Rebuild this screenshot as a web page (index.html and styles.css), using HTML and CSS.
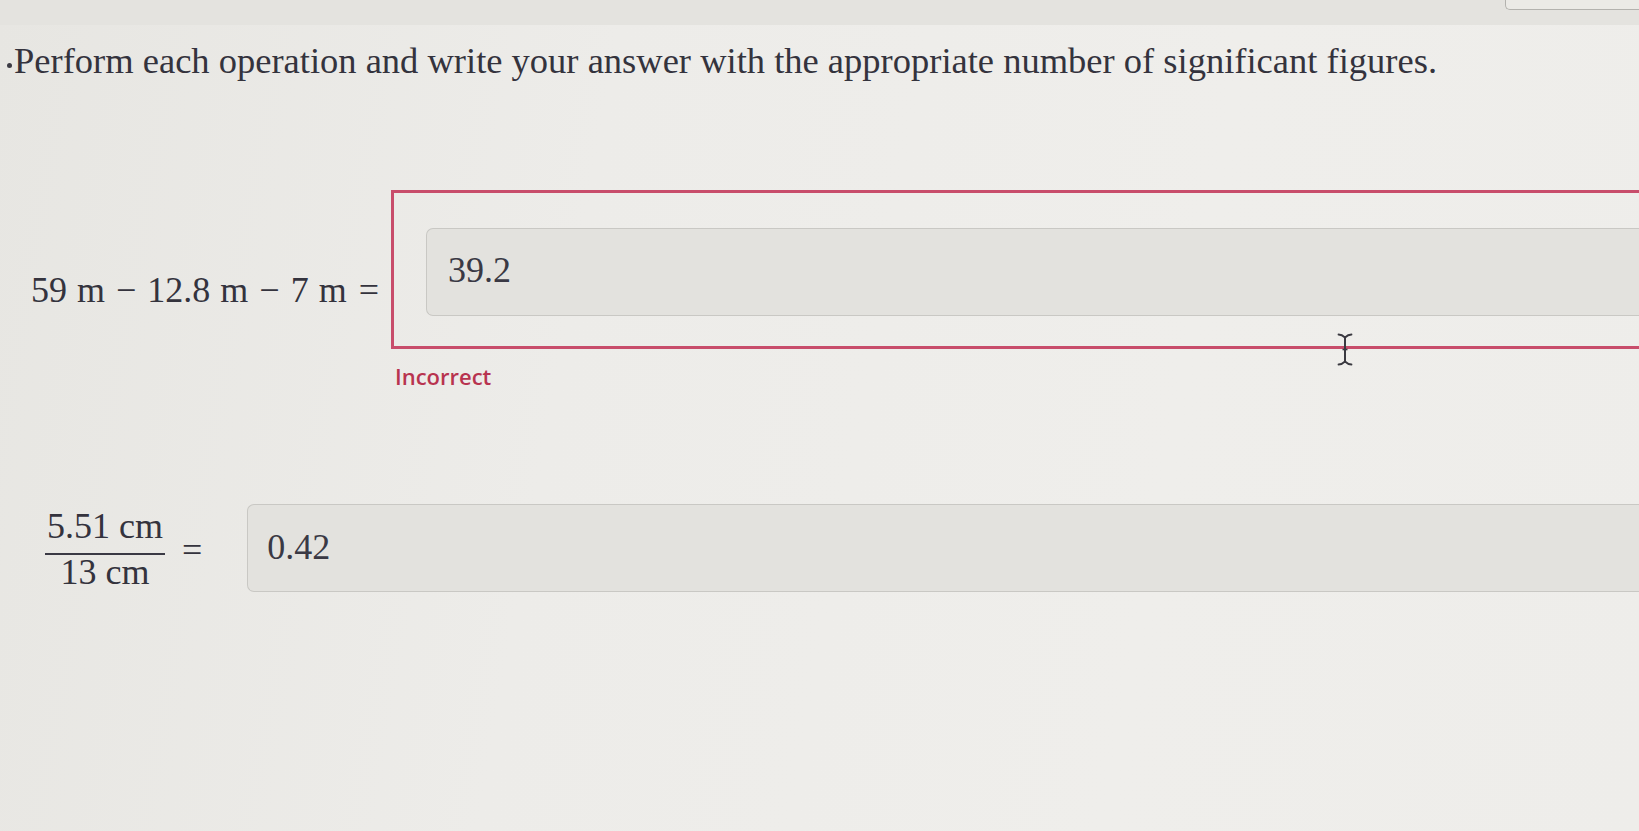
FILE: index.html
```html
<!DOCTYPE html>
<html lang="en">
<head>
<meta charset="utf-8">
<title>Significant figures</title>
<link rel="stylesheet" href="styles.css">
</head>
<body>
<div class="topbar"><div class="topbox"></div></div>
<div class="prompt-row">
  <span class="dot"></span>
  <p class="prompt">Perform each operation and write your answer with the appropriate number of significant figures.</p>
</div>

<div class="question q1">
  <div class="math eq">
    <span>59</span><span class="unit">m</span><span class="op">−</span><span>12.8</span><span class="unit">m</span><span class="op">−</span><span>7</span><span class="unit">m</span><span class="rel">=</span>
  </div>
  <div class="answer">
    <div class="redbox">
      <div class="field">39.2</div>
    </div>
    <div class="feedback">Incorrect</div>
  </div>
</div>

<div class="question q2">
  <div class="math frac">
    <span class="num">5.51 cm</span>
    <span class="bar"></span>
    <span class="den">13 cm</span>
  </div>
  <span class="math rel2">=</span>
  <div class="field field2">0.42</div>
</div>

<svg class="cursor" width="16" height="33" viewBox="0 0 16 33" aria-hidden="true">
  <path d="M1.5 1.5 Q5 1.5 8 4.5 Q11 1.5 14.5 1.5" fill="none" stroke="#3a3940" stroke-width="1.8" stroke-linecap="round"/>
  <path d="M8 4.5 V28.5" fill="none" stroke="#3a3940" stroke-width="2"/>
  <path d="M5.5 16.5 H10.5" fill="none" stroke="#3a3940" stroke-width="1.6"/>
  <path d="M1.5 31.5 Q5 31.5 8 28.5 Q11 31.5 14.5 31.5" fill="none" stroke="#3a3940" stroke-width="1.8" stroke-linecap="round"/>
</svg>
</body>
</html>
```

FILE: styles.css
```css
html, body {
  margin: 0;
  padding: 0;
}
body {
  width: 1639px;
  height: 831px;
  overflow: hidden;
  background: linear-gradient(100deg, #e7e6e2 0%, #edece9 35%, #efeeeb 70%, #eeedea 100%);
  color: #34333d;
  font-family: "Liberation Serif", "Times New Roman", serif;
  position: relative;
}

.topbar {
  height: 25px;
  background: #e4e3df;
  display: flex;
  justify-content: flex-end;
  align-items: flex-start;
}
.topbox {
  width: 133px;
  height: 9px;
  border: 1px solid #b3b2ae;
  border-top: none;
  border-right: none;
  border-radius: 0 0 0 5px;
  background: #ebeae6;
}

.prompt-row {
  display: flex;
  align-items: flex-start;
  margin-top: 14px;
  padding-left: 7px;
}
.dot {
  width: 5px;
  height: 5px;
  border-radius: 50%;
  background: #3c3b44;
  margin-top: 24px;
  margin-right: 2px;
  flex: none;
}
.prompt {
  margin: 0;
  font-size: 36.5px;
  line-height: 44px;
  white-space: nowrap;
}

.question {
  display: flex;
  align-items: flex-start;
}
.q1 {
  margin-top: 107px;
}
.math {
  font-size: 36px;
  line-height: 44px;
  white-space: nowrap;
}
.eq {
  margin-top: 78px;
  margin-left: 31px;
  display: flex;
}
.unit {
  margin-left: 10px;
}
.op {
  margin: 0 11px;
}
.rel {
  margin-left: 12px;
}

.answer {
  flex: 1;
  margin-left: 12px;
  margin-right: -30px;
  display: flex;
  flex-direction: column;
}
.redbox {
  border: 3px solid #c84d6b;
  padding: 35px 0 30px 32px;
}
.field {
  box-sizing: border-box;
  height: 88px;
  background: #e3e2de;
  border: 1px solid #c9c8c4;
  border-right: none;
  border-radius: 7px 0 0 7px;
  padding: 19px 0 0 21px;
  font-family: "Liberation Serif", "Times New Roman", serif;
  font-size: 36px;
  line-height: 44px;
  color: #3a3944;
}
.feedback {
  margin-top: 12px;
  margin-left: 4px;
  font-family: "Open Sans", "Liberation Sans", sans-serif;
  font-weight: 600;
  font-size: 22px;
  line-height: 30px;
  color: #b8334f;
}

.q2 {
  margin-top: 113px;
}
.frac {
  margin-left: 45px;
  margin-top: 2px;
  display: flex;
  flex-direction: column;
  align-items: center;
}
.num {
  line-height: 40px;
  padding: 0 2px;
}
.bar {
  align-self: stretch;
  height: 1.5px;
  background: #3a3944;
  margin-top: 7px;
}
.den {
  line-height: 30px;
  margin-top: 2.5px;
}
.rel2 {
  margin-top: 26px;
  margin-left: 17px;
  line-height: 40px;
}
.field2 {
  flex: 1;
  margin-left: 45px;
  margin-right: -30px;
  padding-top: 20px;
  padding-left: 19px;
}

.cursor {
  position: absolute;
  left: 1337px;
  top: 333px;
}
```
